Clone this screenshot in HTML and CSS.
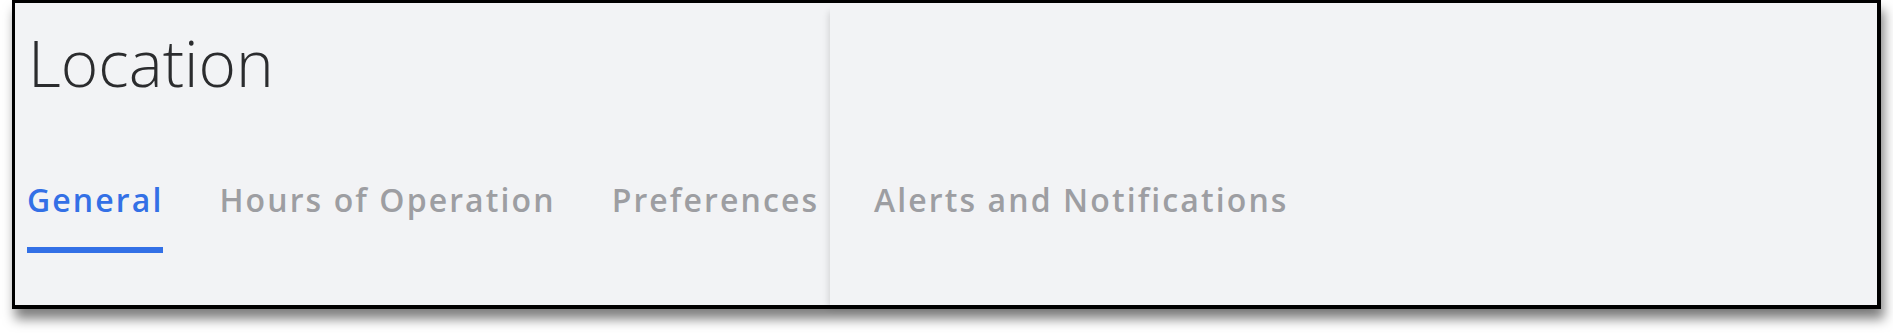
FILE: index.html
```html
<!DOCTYPE html>
<html lang="en">
<head>
<meta charset="utf-8">
<title>Location</title>
<link rel="stylesheet" href="styles.css">
</head>
<body>
<div class="frame">
  <section class="panel panel-main">
    <h1 class="title">Location</h1>
    <nav class="tabs">
      <a class="tab tab-active">General</a>
      <a class="tab">Hours of Operation</a>
      <a class="tab">Preferences</a>
    </nav>
  </section>
  <section class="panel panel-side">
    <nav class="tabs">
      <a class="tab">Alerts and Notifications</a>
    </nav>
  </section>
</div>
</body>
</html>
```

FILE: styles.css
```css
html, body {
  margin: 0;
  padding: 0;
  background: #ffffff;
}

body {
  font-family: "Open Sans", "Liberation Sans", sans-serif;
  width: 1893px;
  height: 333px;
  overflow: hidden;
}

.frame {
  box-sizing: border-box;
  margin-left: 12px;
  width: 1869px;
  height: 309px;
  border-style: solid;
  border-color: #000000;
  border-width: 3px 4px 4px 3px;
  background: #f2f3f5;
  display: flex;
  box-shadow: 3px 10px 11px rgba(0, 0, 0, 0.5);
}

.panel {
  box-sizing: border-box;
  height: 100%;
}

.panel-main {
  width: 815px;
  padding-left: 12px;
  padding-top: 28px;
}

.panel-side {
  flex: 1;
  padding-left: 44px;
  padding-top: 180.6px;
  background: #f2f3f5;
  box-shadow: -4px 6px 7px -3px rgba(0, 0, 0, 0.14);
  position: relative;
}

.title {
  margin: 0 0 0 1px;
  font-size: 64px;
  line-height: 64px;
  font-weight: 300;
  color: #2b2c2e;
}

.tabs {
  display: flex;
  gap: 56px;
  margin-top: 88.6px;
}

.panel-side .tabs {
  margin-top: 0;
}

.tab {
  font-size: 32px;
  line-height: 32px;
  font-weight: 600;
  letter-spacing: 2.1px;
  color: #9d9ea2;
  padding-bottom: 31px;
  border-bottom: 6px solid transparent;
  white-space: nowrap;
}

.tab-active {
  color: #3370e6;
  border-bottom-color: #3370e6;
}
```
